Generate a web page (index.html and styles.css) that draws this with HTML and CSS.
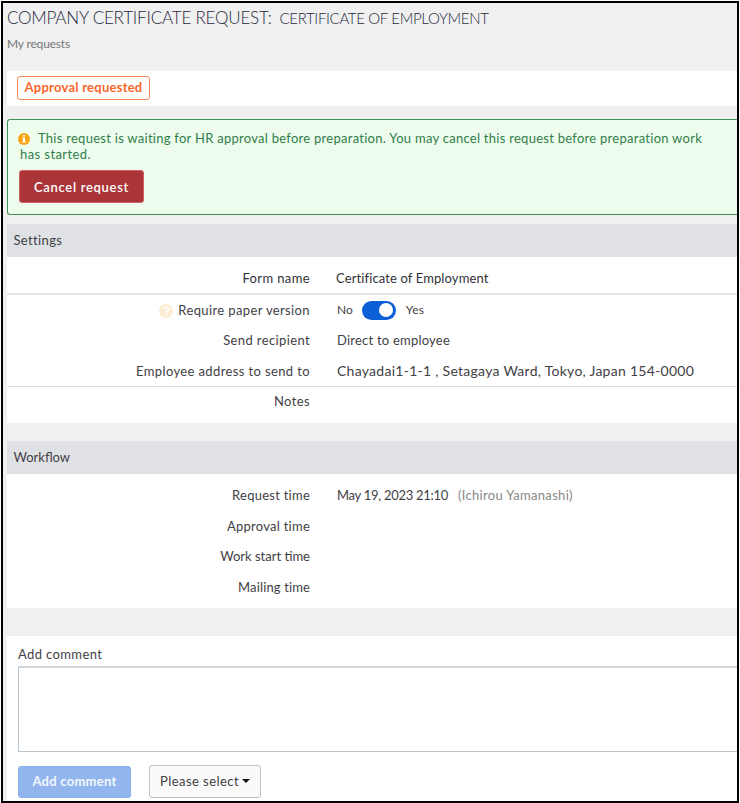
FILE: index.html
```
<!DOCTYPE html>
<html lang="en">
<head>
<meta charset="utf-8">
<title>Company Certificate Request</title>
<link rel="stylesheet" href="styles.css">
</head>
<body>
<main class="page">
  <h1 class="title"><span class="title-main">COMPANY CERTIFICATE REQUEST:</span><span class="title-sub">CERTIFICATE OF EMPLOYMENT</span></h1>
  <div class="crumb">My requests</div>
  <div class="status-bar"><span class="status">Approval requested</span></div>

  <section class="alert">
    <div class="alert-text"><svg class="info" viewBox="0 0 12 12"><circle cx="6" cy="6" r="6" fill="#fba414"/><path d="M5 2h2v1.7H5zM4.3 4.8H7v3.5h.8v1.3H4.2V8.3H5V6.1h-.7z" fill="#fff"/></svg><span class="line-one">This request is waiting for HR approval before preparation. You may cancel this request before preparation work</span> <span class="line-two">has started.</span></div>
    <button class="btn cancel">Cancel request</button>
  </section>

  <section class="card settings">
    <h2 class="card-head">Settings</h2>
    <div class="row first"><span class="label ls-form">Form name</span><span class="value form-value">Certificate of Employment</span></div>
    <div class="row"><span class="label"><svg class="help" viewBox="0 0 14 14"><circle cx="7" cy="7" r="7" fill="#fdecd3"/><path d="M4.8 5.6c0-3 4.500-2.900 4.500-.2C9.300 7 7.200 6.900 7.200 8.400" fill="none" stroke="#fff" stroke-width="1.800"/><path d="M6.200 9.600h2v1.700h-2z" fill="#fff"/></svg>Require paper version</span><span class="value switch"><span class="no">No</span><span class="toggle"><span class="knob"></span></span><span class="yes">Yes</span></span></div>
    <div class="row"><span class="label">Send recipient</span><span class="value direct">Direct to employee</span></div>
    <div class="row address"><span class="label">Employee address to send to</span><span class="value address-value">Chayadai1-1-1 , Setagaya Ward, Tokyo, Japan 154-0000</span></div>
    <div class="row notes"><span class="label">Notes</span></div>
  </section>

  <section class="card workflow">
    <h2 class="card-head flow-head">Workflow</h2>
    <div class="flow-rows">
      <div class="row"><span class="label ls-time">Request time</span><span class="value"><span class="date">May 19, 2023 21:10</span><span class="who">(Ichirou Yamanashi)</span></span></div>
      <div class="row"><span class="label ls-time">Approval time</span></div>
      <div class="row"><span class="label ls-start">Work start time</span></div>
      <div class="row"><span class="label ls-mail">Mailing time</span></div>
    </div>
  </section>

  <section class="card comment">
    <label class="comment-label" for="comment">Add comment</label>
    <textarea id="comment" class="comment-box"></textarea>
    <div class="actions">
      <button class="btn add">Add comment</button>
      <button class="btn select">Please select<span class="caret"></span></button>
    </div>
  </section>
</main>
</body>
</html>
```
FILE: styles.css
```
* { box-sizing: border-box; }
body {
  margin: 0;
  padding: 1px;
  padding-bottom: 0;
  height: 803px;
  overflow: hidden;
  background: #fff;
  color: #3f4145;
  font: 13px/16px Lato, "Liberation Sans", sans-serif;
}
.page {
  height: 802px;
  border: 2px solid #000;
  background: #f0f0f0;
  padding-left: 4px;
  overflow: hidden;
}
.title {
  display: flex;
  align-items: baseline;
  margin: 0;
  padding-top: 3px;
  height: 32px;
  line-height: 24px;
  font-weight: 300;
  color: #1f2a40;
}
.title-main { width: 272.5px; font-size: 17px; letter-spacing: -.2px; white-space: nowrap; }
.title-sub { font-size: 15px; letter-spacing: -.34px; white-space: nowrap; }
.crumb { height: 36px; font-size: 12px; line-height: 18px; letter-spacing: -.17px; color: #777; }
.status-bar { height: 35px; padding: 5px 10px; background: #fff; }
.status {
  display: block;
  width: 133px;
  height: 24px;
  border: 1px solid #f58a58;
  border-radius: 3px;
  color: #f8672a;
  font-weight: 700;
  line-height: 21px;
  text-align: center;
  letter-spacing: .25px;
}
.alert {
  height: 96px;
  margin-top: 13px;
  padding: 10px 0 0 10px;
  border: 1px solid #3f9157;
  border-right: 0;
  border-radius: 3px 0 0 3px;
  background: #edfced;
  color: #317e4b;
}
.alert-text { height: 40px; white-space: nowrap; letter-spacing: .27px; }
.info { width: 12px; height: 12px; margin-right: 8px; vertical-align: -2px; }
.line-two { display: block; padding-left: 2px; letter-spacing: .42px; }
.btn { display: block; padding: 0; border-radius: 3px; font: inherit; }
.cancel {
  width: 125px;
  height: 33px;
  margin-left: 1px;
  border: 1px solid #cf6163;
  background: #aa3437;
  color: #fff;
  font-weight: 600;
  letter-spacing: .7px;
}
.card { background: #fff; }
.settings { height: 199px; margin-top: 9px; }
.card-head {
  margin: 0;
  height: 33px;
  padding-left: 6.5px;
  background: #dfe1e5;
  font-size: 13px;
  font-weight: 400;
  line-height: 33px;
  letter-spacing: .35px;
}
.flow-head { letter-spacing: 0; }
.row {
  display: grid;
  grid-template-columns: 303px 1fr;
  column-gap: 27px;
  height: 30.6px;
  align-items: center;
}
.label { text-align: right; letter-spacing: .38px; }
.value { white-space: nowrap; }
.first { height: 38px; padding-top: 6px; border-bottom: 2px solid #e6e6e6; color: #303238; }
.form-value { margin-left: -1px; letter-spacing: .12px; }
.help { width: 14px; height: 14px; margin-right: 5px; vertical-align: -3px; }
.first + .row + .row { padding-bottom: 2px; }
.switch { display: flex; align-items: center; font-size: 12px; }
.toggle { display: flex; justify-content: flex-end; width: 34px; height: 19px; margin: 0 10px 0 9px; padding: 2.5px; border-radius: 10px; background: #0c5fd5; }
.knob { width: 14px; height: 14px; border-radius: 50%; background: #fff; }
.yes { letter-spacing: .25px; }
.direct { letter-spacing: .22px; }
.address { border-bottom: 1px solid #ddd; }
.address-value { padding-top: 1px; font-size: 14px; letter-spacing: .27px; }
.notes { height: 29px; }
.workflow { height: 167px; margin-top: 18px; }
.flow-rows { padding-top: 6px; }
.flow-rows .row { height: 30.5px; }
.ls-time { letter-spacing: .25px; }
.ls-start { letter-spacing: 0; }
.ls-mail { letter-spacing: .13px; }
.date { letter-spacing: -.29px; }
.who { margin-left: 10px; color: #888; letter-spacing: .32px; }
.comment { height: 167px; margin-top: 28px; padding: 10px 0 0 11px; }
.comment-label { display: block; height: 20px; letter-spacing: .38px; }
.comment-box {
  display: block;
  width: 100%;
  height: 86px;
  border: 1px solid #b8c2ca;
  border-top: 2px solid #ced6dc;
  border-right: 0;
  background: #fff;
  resize: none;
}
.actions { display: flex; gap: 18px; padding-top: 13px; }
.add { width: 113px; height: 32px; margin-top: 1px; padding-bottom: 2px; border: 1px solid #86afe9; background: #91b5ec; color: #f2f7ff; font-weight: 700; letter-spacing: .27px; }
.select { display: flex; align-items: center; justify-content: center; width: 112px; height: 33px; padding-bottom: 1px; border: 1px solid #b9c3cb; background: #fafafa; color: #3f4145; letter-spacing: .44px; }
.caret { margin-left: 3px; border: 4px solid transparent; border-top-color: #111; border-bottom: 0; }
```
